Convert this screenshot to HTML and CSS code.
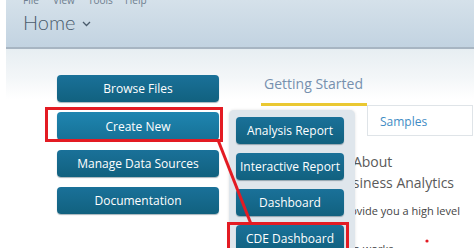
FILE: index.html
```html
<!DOCTYPE html>
<html lang="en">
<head>
    <meta charset="UTF-8">
    <title>Home</title>
    <link rel="stylesheet" href="styles.css">
</head>
<body>
    <div class="app">
        <div class="topbar">
            <div class="menu">
                <span class="m-file">File</span>
                <span class="m-view">View</span>
                <span class="m-tools">Tools</span>
                <span>Help</span>
            </div>
            <div class="title">
                Home
                <svg class="chev" width="9" height="6" viewBox="0 0 9 6"><path d="M1 1 L4.5 4.5 L8 1" fill="none" stroke="#4a5b6c" stroke-width="1.3"/></svg>
            </div>
        </div>

        <div class="main">
            <div class="actions">
                <button class="btn">Browse Files</button>
                <button class="btn btn-active">Create New</button>
                <button class="btn">Manage Data Sources</button>
                <button class="btn">Documentation</button>
            </div>

            <div class="getting-started">
                <h2>Getting Started</h2>
                <div class="tabs">
                    <div class="tab tab-current"></div>
                    <div class="tab">Samples</div>
                </div>
                <div class="tab-body">
                    <p class="lead">Learn About<br>On Business Analytics</p>
                    <p class="copy">We will provide you a high level</p>
                    <p class="copy">people who works</p>
                </div>
            </div>
        </div>

        <!-- Create New popup -->
        <div class="popup">
            <button class="btn">Analysis Report</button>
            <button class="btn">Interactive Report</button>
            <button class="btn">Dashboard</button>
            <button class="btn">CDE Dashboard</button>
        </div>

        <!-- annotations -->
        <div class="mark mark-create"></div>
        <div class="mark mark-cde"></div>
        <svg class="arrow" width="474" height="248" viewBox="0 0 474 248">
            <line x1="218" y1="140" x2="251" y2="224" stroke="#e31b23" stroke-width="3"/>
            <circle cx="427" cy="241" r="1.6" fill="#e31b23"/>
        </svg>
    </div>
</body>
</html>
```

FILE: styles.css
```css
* {
    box-sizing: border-box;
}

body {
    margin: 0;
    background: #fff;
    font-family: 'Open Sans', sans-serif;
    overflow: hidden;
}

.app {
    position: relative;
    width: 474px;
    height: 248px;
    overflow: hidden;
    background: #fff;
}

.topbar {
    display: flow-root;
    margin-left: 6px;
    height: 49px;
    padding-left: 17px;
    background: linear-gradient(#d5e1ea, #c2d3e1);
    border-bottom: 2px solid #a7b5c2;
}

.menu {
    display: flex;
    margin-top: -7px;
    font-size: 10px;
    color: #6e7e8e;
    line-height: 14px;
}

.m-file {
    width: 30px;
}

.m-view {
    width: 35px;
}

.m-tools {
    width: 37px;
}

.title {
    font-family: Lato, 'Open Sans', sans-serif;
    font-size: 20px;
    font-weight: 300;
    color: #4a5b6c;
    line-height: 30px;
}

.chev {
    margin-left: 1px;
    vertical-align: 3px;
}

.main {
    display: flex;
    margin-left: 6px;
    padding: 26px 0 0 51px;
    gap: 42px;
    height: 199px;
    background: linear-gradient(#e7eef2, #f3f6f8 28px, #fff 50px);
}

.actions {
    display: flex;
    flex-direction: column;
    gap: 10px;
}

.btn {
    display: block;
    width: 162px;
    height: 27px;
    border: none;
    border-radius: 4px;
    background: linear-gradient(#1a7199, #11617f);
    box-shadow: 0 1px 1px rgba(0, 40, 60, 0.35);
    color: #fff;
    font-family: 'Open Sans', sans-serif;
    font-size: 12px;
    padding: 0;
}

.btn-active {
    height: 28px;
    background: linear-gradient(#1f85b0, #167196);
}

.getting-started {
    flex: 1;
    white-space: nowrap;
}

.getting-started h2 {
    margin: 0 0 10px 3px;
    font-size: 14px;
    font-weight: 400;
    color: #7690ae;
    line-height: 18px;
}

.tabs {
    display: flex;
    height: 33px;
}

.tab {
    width: 106px;
    background: #fff;
    border: 1px solid #dfe4e8;
    margin-top: 2px;
    padding: 7px 0 0 12px;
    font-size: 12px;
    color: #3f8cc4;
}

.tab-current {
    margin-top: 0;
    border: none;
    border-top: 3px solid #eac832;
}

.tab-body {
    background: #fff;
    height: 130px;
    padding: 15px 0 0 39px;
}

.lead {
    margin: 0 0 10px 12px;
    font-size: 14px;
    line-height: 21px;
    color: #5a5a5a;
}

.copy {
    margin: 0 0 23px;
    font-size: 11px;
    line-height: 15px;
    color: #444;
}

.popup {
    position: absolute;
    left: 229px;
    top: 110px;
    width: 126px;
    height: 160px;
    padding: 7px 0 0 7px;
    border-radius: 5px;
    background: #dfe6ec;
    box-shadow: 0 0 3px rgba(0, 0, 0, 0.12);
    display: flex;
    flex-direction: column;
    gap: 9px;
}

.popup .btn {
    width: 108px;
}

.mark {
    position: absolute;
    border: 3px solid #e31b23;
}

.mark-create {
    left: 45px;
    top: 107px;
    width: 178px;
    height: 35px;
}

.mark-cde {
    left: 227px;
    top: 222px;
    width: 122px;
    height: 40px;
}

.arrow {
    position: absolute;
    left: 0;
    top: 0;
}
```
